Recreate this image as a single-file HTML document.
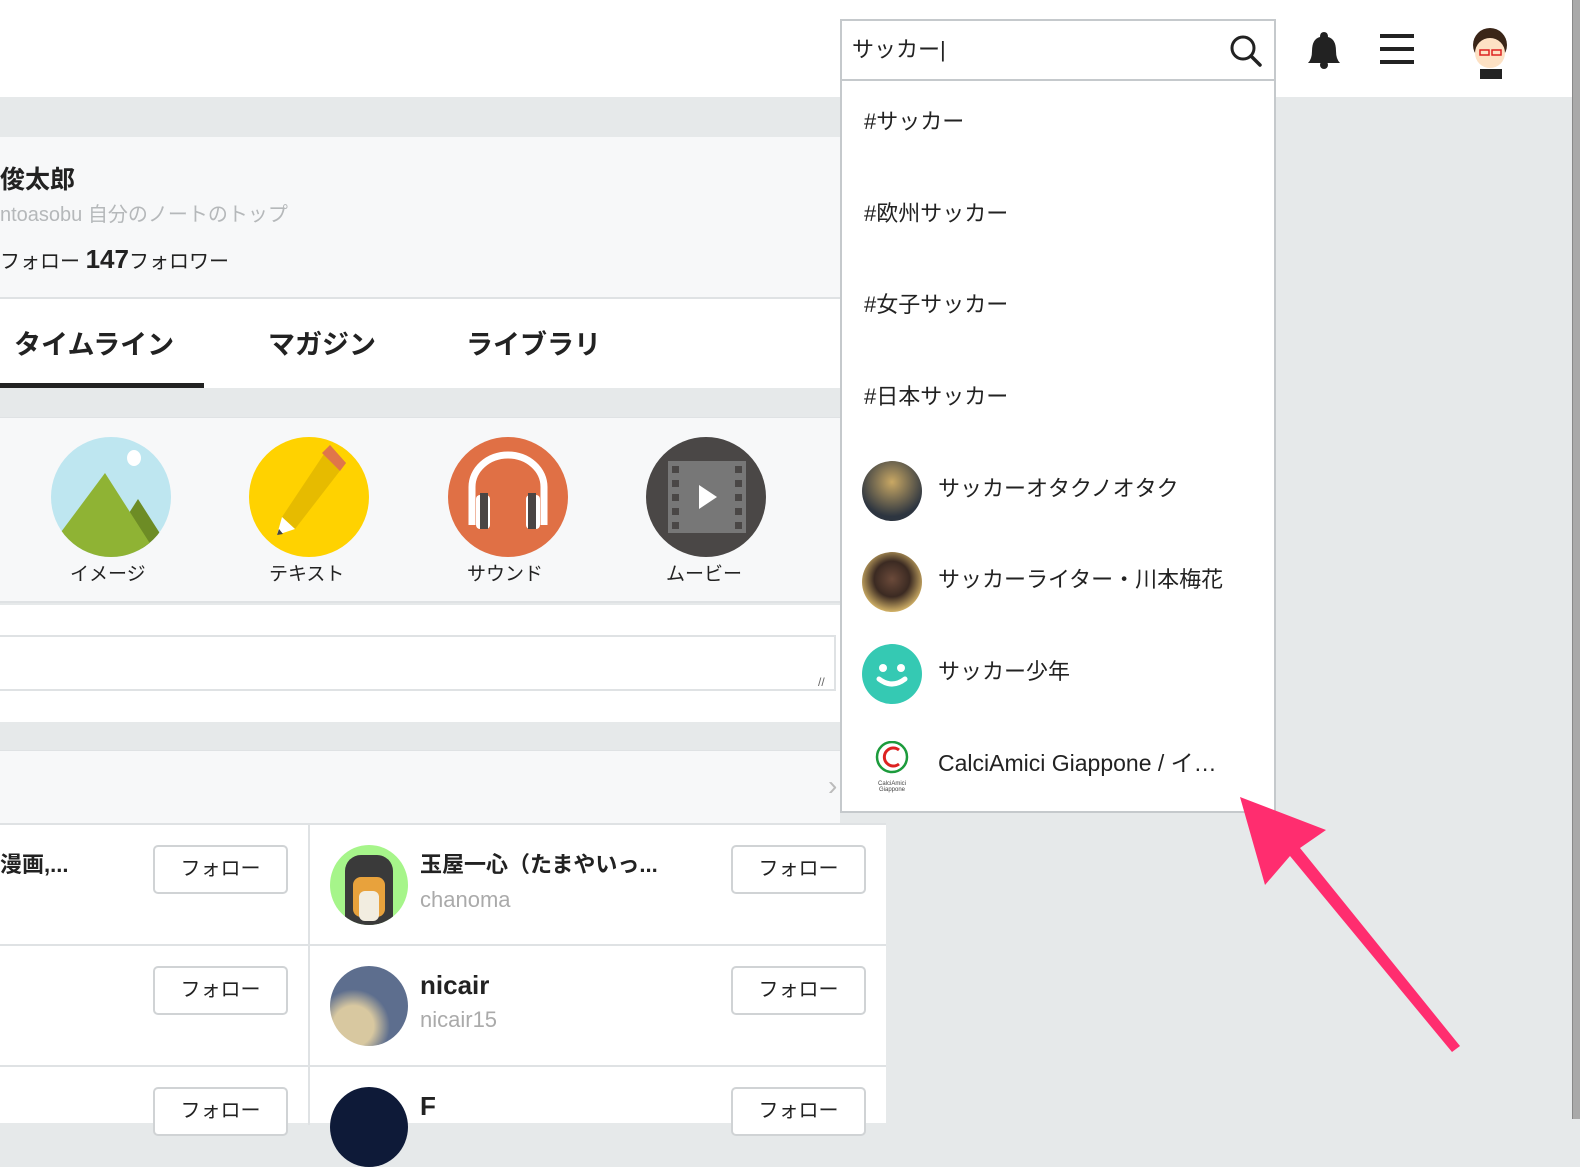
<!DOCTYPE html>
<html><head><meta charset="utf-8"><style>
*{margin:0;padding:0;box-sizing:border-box}
body{width:1580px;height:1119px;overflow:hidden;position:relative;background:#e6e9ea;font-family:"Liberation Sans","Noto Sans CJK JP",sans-serif;color:#222;line-height:1.2}
.abs{position:absolute}
.hdr{left:0;top:0;width:1572px;height:97px;background:#fff}
.sb{left:1572px;top:0;width:8px;height:1119px;background:#a9a9a9;border-left:1px solid #888}
.main{left:0;top:97px;width:886px;height:1022px;background:#e6e9ea}
.light{background:#f7f8f9}
.btn{position:absolute;width:135px;height:49px;border:2px solid #d0d3d5;border-radius:5px;background:#fff;font-size:20px;text-align:center;line-height:45px;color:#222}
.dd{left:840px;top:19px;width:436px;height:794px;background:#fff;border:2px solid #c5c9cc}
.item{position:absolute;left:22px;font-size:22px;color:#222;white-space:nowrap}
.av{position:absolute;left:20px;width:60px;height:60px;border-radius:50%}
.ut{position:absolute;left:96px;font-size:22px;white-space:nowrap}
</style></head><body>
<div class="abs hdr"></div>
<div class="abs sb"></div>
<div class="abs main">
 <div class="abs light" style="left:0;top:40px;width:840px;height:162px;border-bottom:2px solid #dfe2e4"></div>
 <div class="abs" style="left:0;top:68px;font-size:25px;font-weight:bold">俊太郎</div>
 <div class="abs" style="left:0;top:106px;font-size:20px;color:#b5b8ba">ntoasobu 自分のノートのトップ</div>
 <div class="abs" style="left:0;top:147px;font-size:20px">フォロー <b style="font-size:26px">147</b>フォロワー</div>
 <div class="abs" style="left:0;top:202px;width:840px;height:89px;background:#fff"></div>
 <div class="abs" style="left:14px;top:232px;font-size:27px;font-weight:bold">タイムライン</div>
 <div class="abs" style="left:268px;top:232px;font-size:27px;font-weight:bold">マガジン</div>
 <div class="abs" style="left:466px;top:232px;font-size:27px;font-weight:bold">ライブラリ</div>
 <div class="abs" style="left:0;top:286px;width:204px;height:5px;background:#222"></div>
 <div class="abs light" style="left:0;top:320px;width:840px;height:186px;border-top:1px solid #dfe2e4;border-bottom:2px solid #dfe2e4"></div>
 <svg class="abs" style="left:0;top:320px" width="840" height="186">
  <defs><clipPath id="c1"><circle cx="111" cy="80" r="60"/></clipPath></defs>
  <g clip-path="url(#c1)"><rect x="40" y="10" width="140" height="140" fill="#bee6f0"/><polygon points="120,110 138,82 175,140 160,150" fill="#6d8c25"/><polygon points="35,150 105,56 165,150" fill="#8fb334"/></g>
  <ellipse cx="134" cy="41" rx="7" ry="8" fill="#fff"/>
  <circle cx="309" cy="80" r="60" fill="#ffd200"/>
  <polygon points="330,28 346,46 295,112 282,100" fill="#e6bb00"/><polygon points="330,28 346,46 340,54 322,36" fill="#e0764a"/>
  <polygon points="282,100 295,112 277,118" fill="#fff"/><polygon points="279,112 283,117 277,118" fill="#444"/>
  <circle cx="508" cy="80" r="60" fill="#e07045"/>
  <path d="M472 108 V70 a36 32 0 0 1 72 0 V108" fill="none" stroke="#fff" stroke-width="7"/>
  <rect x="476" y="78" width="14" height="34" rx="4" fill="#fff"/><rect x="526" y="78" width="14" height="34" rx="4" fill="#fff"/>
  <rect x="480" y="76" width="8" height="36" fill="#4a4544"/><rect x="528" y="76" width="8" height="36" fill="#4a4544"/>
  <circle cx="706" cy="80" r="60" fill="#4a4746"/>
  <rect x="668" y="44" width="78" height="72" fill="#777"/>
  <g fill="#4a4746"><rect x="672" y="49" width="7" height="7"/><rect x="672" y="63" width="7" height="7"/><rect x="672" y="77" width="7" height="7"/><rect x="672" y="91" width="7" height="7"/><rect x="672" y="105" width="7" height="7"/><rect x="735" y="49" width="7" height="7"/><rect x="735" y="63" width="7" height="7"/><rect x="735" y="77" width="7" height="7"/><rect x="735" y="91" width="7" height="7"/><rect x="735" y="105" width="7" height="7"/></g>
  <polygon points="699,68 717,80 699,92" fill="#fff"/>
 </svg>
 <div class="abs" style="left:70px;top:467px;font-size:19px">イメージ</div>
 <div class="abs" style="left:269px;top:467px;font-size:19px">テキスト</div>
 <div class="abs" style="left:467px;top:467px;font-size:19px">サウンド</div>
 <div class="abs" style="left:666px;top:467px;font-size:19px">ムービー</div>
 <div class="abs" style="left:0;top:508px;width:840px;height:117px;background:#fff"></div>
 <div class="abs" style="left:-2px;top:538px;width:838px;height:56px;border:2px solid #dfe2e4;background:#fff"></div>
 <div class="abs" style="left:818px;top:578px;font-size:12px;color:#666">//</div>
 <div class="abs light" style="left:0;top:653px;width:840px;height:74px;border-top:1px solid #dfe2e4"></div>
 <div class="abs" style="left:828px;top:672px;font-size:28px;color:#bbb">›</div>
 <div class="abs" style="left:0;top:726px;width:886px;height:300px;background:#fff;border-top:2px solid #dfe2e4"></div>
 <div class="abs" style="left:308px;top:728px;width:2px;height:300px;background:#dfe2e4"></div>
 <div class="abs" style="left:0;top:847px;width:886px;height:2px;background:#dfe2e4"></div>
 <div class="abs" style="left:0;top:968px;width:886px;height:2px;background:#dfe2e4"></div>
 <div class="abs" style="left:0;top:755px;font-size:22px;font-weight:bold">漫画,...</div>
 <div class="btn" style="left:153px;top:748px">フォロー</div>
 <div class="btn" style="left:153px;top:869px">フォロー</div>
 <div class="btn" style="left:153px;top:990px">フォロー</div>
 <div class="btn" style="left:731px;top:748px">フォロー</div>
 <div class="btn" style="left:731px;top:869px">フォロー</div>
 <div class="btn" style="left:731px;top:990px">フォロー</div>
 <div class="abs" style="left:330px;top:748px;width:78px;height:80px;border-radius:50%;background:#a6f58a;overflow:hidden"><div style="margin:10px auto 0;width:48px;height:72px;background:#3a3a3a;border-radius:16px 16px 6px 6px;position:relative"><div style="position:absolute;left:8px;top:22px;width:32px;height:40px;background:#e8a23c;border-radius:8px"></div><div style="position:absolute;left:14px;top:36px;width:20px;height:30px;background:#f2ede0;border-radius:6px"></div></div></div>
 <div class="abs" style="left:420px;top:755px;font-size:22px;font-weight:bold">玉屋一心（たまやいっ...</div>
 <div class="abs" style="left:420px;top:790px;font-size:22px;color:#aaa">chanoma</div>
 <div class="abs" style="left:330px;top:869px;width:78px;height:80px;border-radius:50%;background:radial-gradient(circle at 30% 75%,#d8c8a0 0,#d8c8a0 25%,#5d6e8e 45%)"></div>
 <div class="abs" style="left:420px;top:873px;font-size:26px;font-weight:bold">nicair</div>
 <div class="abs" style="left:420px;top:910px;font-size:22px;color:#aaa">nicair15</div>
 <div class="abs" style="left:330px;top:990px;width:78px;height:80px;border-radius:50%;background:#0e1a38"></div>
 <div class="abs" style="left:420px;top:994px;font-size:26px;font-weight:bold">F</div>
</div>
<!-- header icons -->
<svg class="abs" style="left:1300px;top:25px" width="250" height="60">
 <path d="M8 38 q4-4 4-12 q0-12 8-14 q0-5 4-5 q4 0 4 5 q8 2 8 14 q0 8 4 12 z" fill="#222"/><circle cx="24" cy="40" r="4" fill="#222"/>
 <rect x="80" y="9" width="34" height="4" fill="#222"/><rect x="80" y="22" width="34" height="4" fill="#222"/><rect x="80" y="35" width="34" height="4" fill="#222"/>
 <circle cx="190" cy="20" r="17" fill="#3a2517"/><circle cx="190" cy="28" r="15" fill="#fde1c4"/><rect x="180" y="25" width="9" height="5" fill="none" stroke="#d22" stroke-width="1.5"/><rect x="192" y="25" width="9" height="5" fill="none" stroke="#d22" stroke-width="1.5"/><path d="M180 44 h22 v10 h-22z" fill="#222"/>
</svg>
<!-- dropdown -->
<div class="abs dd">
 <div class="abs" style="left:0;top:0;width:432px;height:60px;border-bottom:2px solid #c5c9cc"></div>
 <div class="abs" style="left:10px;top:16px;font-size:22px">サッカー<span style="font-weight:100">|</span></div>
 <svg class="abs" style="left:386px;top:12px" width="36" height="36"><circle cx="15" cy="15" r="11" fill="none" stroke="#222" stroke-width="3"/><line x1="23" y1="23" x2="32" y2="32" stroke="#222" stroke-width="3.5" stroke-linecap="round"/></svg>
 <div class="item" style="top:88px">#サッカー</div>
 <div class="item" style="top:180px">#欧州サッカー</div>
 <div class="item" style="top:271px">#女子サッカー</div>
 <div class="item" style="top:363px">#日本サッカー</div>
 <div class="av" style="top:440px;background:radial-gradient(circle at 50% 35%,#c9a864,#2d3540 70%)"></div>
 <div class="ut" style="top:455px">サッカーオタクノオタク</div>
 <div class="av" style="top:531px;background:radial-gradient(circle at 50% 45%,#6b4a3a,#3b2a22 40%,#d8b76a 75%)"></div>
 <div class="ut" style="top:546px">サッカーライター・川本梅花</div>
 <div class="av" style="top:623px;background:#35c9b3"></div>
 <svg class="abs" style="left:20px;top:623px" width="60" height="60"><circle cx="21" cy="24" r="4" fill="#fff"/><circle cx="39" cy="24" r="4" fill="#fff"/><path d="M17 35 q13 10 26 0" stroke="#fff" stroke-width="5" fill="none" stroke-linecap="round"/></svg>
 <div class="ut" style="top:638px">サッカー少年</div>
 <svg class="abs" style="left:30px;top:720px" width="40" height="52"><circle cx="20" cy="16" r="15" fill="none" stroke="#1c9b3c" stroke-width="2.5"/><path d="M27 9 a9 9 0 1 0 0 14" fill="none" stroke="#d22" stroke-width="3"/><text x="20" y="44" font-size="6" text-anchor="middle" fill="#444">CalciAmici</text><text x="20" y="50" font-size="6" text-anchor="middle" fill="#444">Giappone</text></svg>
 <div class="ut" style="top:729px;font-size:23px">CalciAmici Giappone / イ…</div>
</div>
<!-- arrow -->
<svg class="abs" style="left:0;top:0" width="1580" height="1119">
 <polygon points="1240,797 1326,830 1300,848 1460,1046 1452,1052 1290,856 1265,885" fill="#ff2d6f"/>
</svg>
</body></html>
